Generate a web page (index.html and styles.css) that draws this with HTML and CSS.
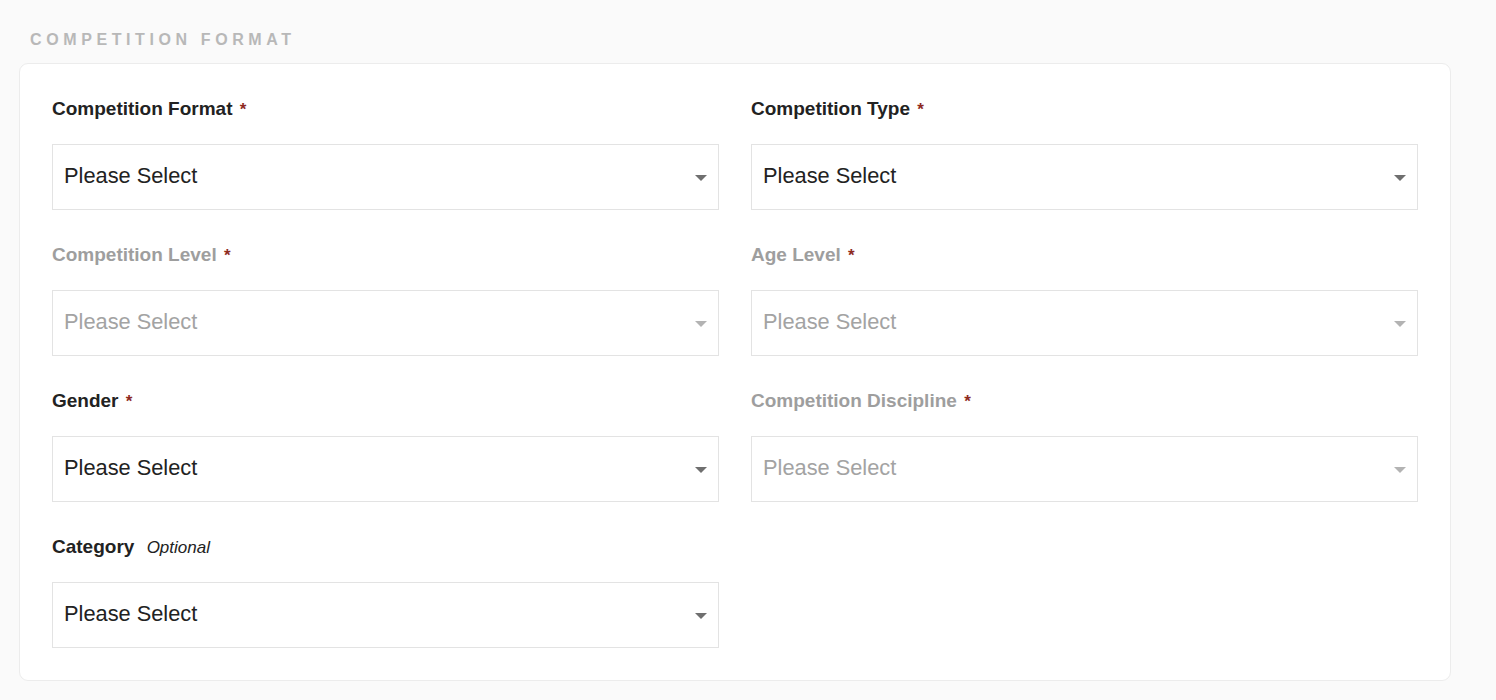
FILE: index.html
```html
<!DOCTYPE html>
<html>
<head>
<meta charset="utf-8">
<link rel="stylesheet" href="styles.css">
</head>
<body>
<div class="page">
  <h2 class="section-title">COMPETITION FORMAT</h2>
  <div class="card">
    <div class="grid">
      <div class="field">
        <div class="label">Competition Format <span class="req">*</span></div>
        <div class="select"><span class="value">Please Select</span><span class="arrow"></span></div>
      </div>
      <div class="field">
        <div class="label">Competition Type <span class="req">*</span></div>
        <div class="select"><span class="value">Please Select</span><span class="arrow"></span></div>
      </div>
      <div class="field disabled">
        <div class="label">Competition Level <span class="req">*</span></div>
        <div class="select"><span class="value">Please Select</span><span class="arrow"></span></div>
      </div>
      <div class="field disabled">
        <div class="label">Age Level <span class="req">*</span></div>
        <div class="select"><span class="value">Please Select</span><span class="arrow"></span></div>
      </div>
      <div class="field">
        <div class="label">Gender <span class="req">*</span></div>
        <div class="select"><span class="value">Please Select</span><span class="arrow"></span></div>
      </div>
      <div class="field disabled">
        <div class="label">Competition Discipline <span class="req">*</span></div>
        <div class="select"><span class="value">Please Select</span><span class="arrow"></span></div>
      </div>
      <div class="field">
        <div class="label">Category <span class="opt">Optional</span></div>
        <div class="select"><span class="value">Please Select</span><span class="arrow"></span></div>
      </div>
    </div>
  </div>
</div>
</body>
</html>
```
FILE: styles.css
```css
html, body {
  margin: 0;
  padding: 0;
  background: #fafafa;
  font-family: "Liberation Sans", Arial, sans-serif;
}
.page {
  padding: 30px 45px 0 19px;
}
.section-title {
  margin: 0 0 13px 11px;
  font-size: 16px;
  line-height: 20px;
  font-weight: bold;
  letter-spacing: 4.6px;
  color: #b8b8b8;
}
.card {
  background: #fff;
  border: 1px solid #ececec;
  border-radius: 9px;
  padding: 35px 32px 32px 32px;
}
.grid {
  display: grid;
  grid-template-columns: 1fr 1fr;
  column-gap: 32px;
  row-gap: 35px;
}
.label {
  height: 20px;
  font-size: 19px;
  line-height: 20px;
  font-weight: bold;
  color: #222;
  margin-bottom: 25px;
  white-space: nowrap;
}
.req {
  color: #8e2b1f;
  font-size: 17px;
  line-height: 1;
  margin-left: 2px;
}
.opt {
  font-weight: normal;
  font-style: italic;
  font-size: 17px;
  line-height: 1;
  margin-left: 7px;
  color: #222;
}
.select {
  height: 64px;
  border: 1px solid #e3e3e3;
  display: flex;
  align-items: center;
  justify-content: space-between;
  padding: 0 11px 0 11px;
  background: #fff;
}
.value {
  font-size: 21.8px;
  color: #222;
  margin-top: -2px;
}
.arrow {
  width: 0;
  height: 0;
  border-left: 6px solid transparent;
  border-right: 6px solid transparent;
  border-top: 6px solid #6f6f6f;
  margin-top: 2px;
}
.disabled .label { color: #9e9e9e; }
.disabled .value { color: #a3a3a3; }
.disabled .arrow { border-top-color: #b3b3b3; }
```
